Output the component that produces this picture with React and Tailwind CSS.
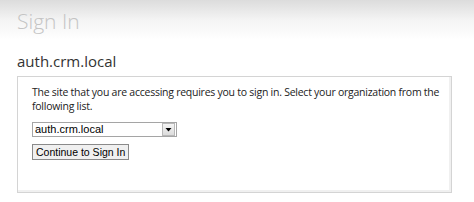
import React from 'react';

export default function App() {
  return (
    <div className="w-[474px] h-[202px] bg-white overflow-hidden relative" style={{ fontFamily: '"Open Sans", "Noto Sans", sans-serif' }}>
      {/* header band */}
      <div className="h-[40px] bg-gradient-to-b from-[#dcdcdc] via-[#f4f4f4] via-50% to-white pl-[17px] pt-[9px]">
        <h1 className="text-[21px] leading-[24px] font-light text-[#c4c4c4]">Sign In</h1>
      </div>

      <div className="pl-[17px] pr-[22px]">
        <h2 className="mt-[12px] text-[15px] leading-[18px] text-[#333]">auth.crm.local</h2>

        <div className="mt-[6px] h-[117px] border border-[#d4d4d4] shadow-[inset_-2px_-2px_0_#f0f0f0] pl-[14px] pr-[2px] pt-[8px]">
          <p className="text-[10.5px] leading-[14px] tracking-[-0.25px] text-[#222]">
            The site that you are accessing requires you to sign in. Select your organization from the following list.
          </p>

          <div className="mt-[9px] flex w-[145px] h-[15px] border border-[#a5a5a5] items-center" style={{ fontFamily: '"Liberation Sans", Arial, sans-serif' }}>
            <span className="flex-1 pl-[2px] text-[11px] leading-[13px] text-black">auth.crm.local</span>
            <span className="w-[13px] h-[13px] mr-px bg-gradient-to-b from-[#f4f4f4] to-[#dcdcdc] border border-[#b8b8b8] flex items-center justify-center">
              <svg width="7" height="5" viewBox="0 0 7 5"><path d="M0.5 1h6L3.5 4.5z" fill="#000" /></svg>
            </span>
          </div>

          <button
            className="mt-[7px] block h-[16px] px-[3px] border border-[#8a8a8a] bg-[#f0f0f0] text-[10.5px] leading-[13px] text-black"
            style={{ fontFamily: '"Liberation Sans", Arial, sans-serif' }}
          >
            Continue to Sign In
          </button>
        </div>
      </div>
    </div>
  );
}
